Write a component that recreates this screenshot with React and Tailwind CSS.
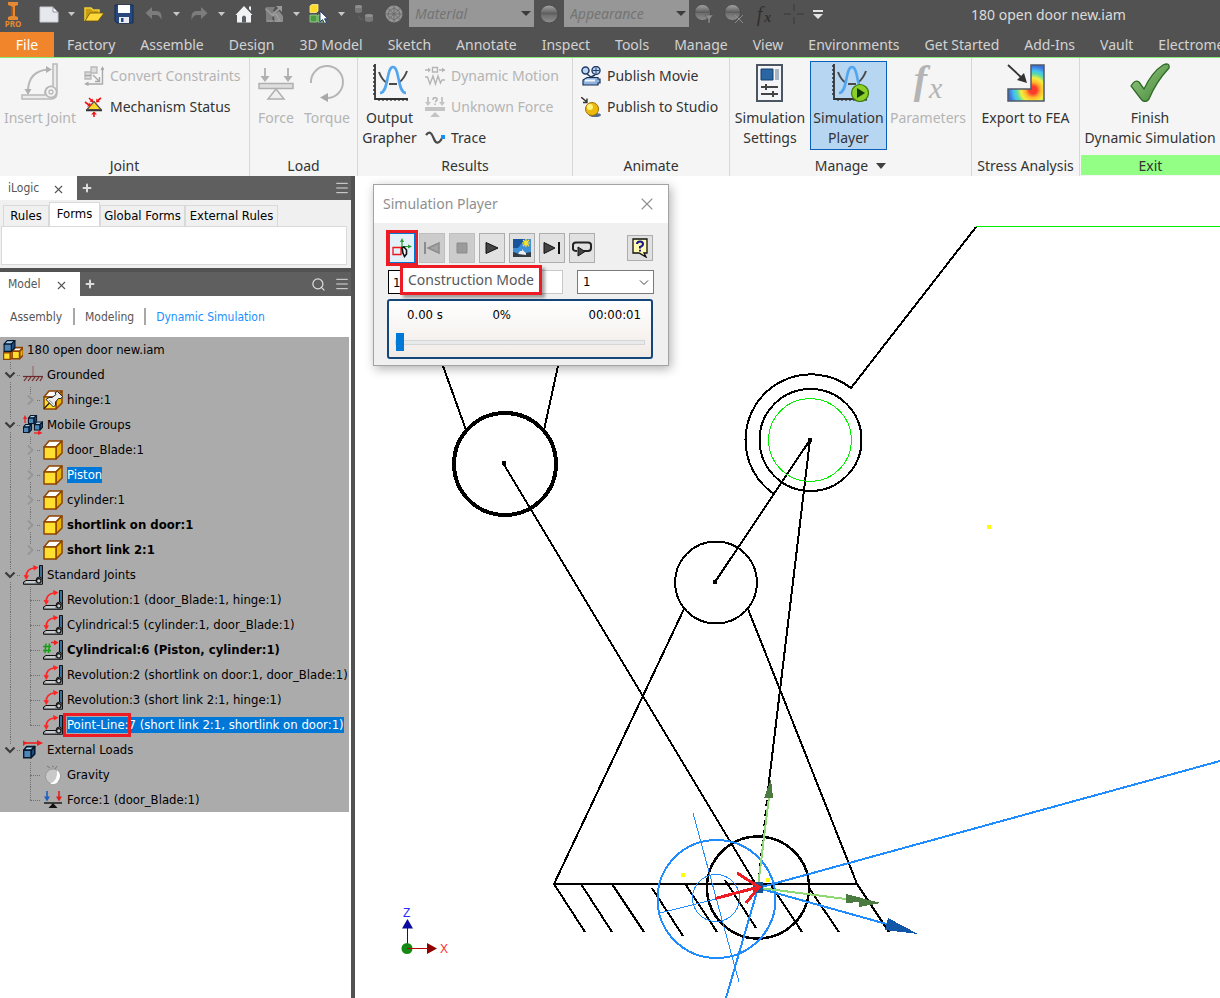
import { useState } from 'react';
import { Menu, Plus, Search, X } from 'lucide-react';

const TABS = [
    'Factory', 'Assemble', 'Design', '3D Model', 'Sketch', 'Annotate', 'Inspect', 'Tools',
    'Manage', 'View', 'Environments', 'Get Started', 'Add-Ins', 'Vault', 'Electrome',
];

const TREE = [
    { label: 'Grounded', icon: 'ground', children: [{ label: 'hinge:1', icon: 'pinned', more: true }] },
    {
        label: 'Mobile Groups',
        icon: 'groups',
        children: [
            { label: 'door_Blade:1', icon: 'part', more: true },
            { label: 'Piston', icon: 'part', more: true, selected: true },
            { label: 'cylinder:1', icon: 'part', more: true },
            { label: 'shortlink on door:1', icon: 'part', more: true, bold: true },
            { label: 'short link 2:1', icon: 'part', more: true, bold: true },
        ],
    },
    {
        label: 'Standard Joints',
        icon: 'joint',
        children: [
            { label: 'Revolution:1 (door_Blade:1, hinge:1)', icon: 'joint' },
            { label: 'Cylindrical:5 (cylinder:1, door_Blade:1)', icon: 'joint' },
            { label: 'Cylindrical:6 (Piston, cylinder:1)', icon: 'jointHash', bold: true },
            { label: 'Revolution:2 (shortlink on door:1, door_Blade:1)', icon: 'joint' },
            { label: 'Revolution:3 (short link 2:1, hinge:1)', icon: 'joint' },
            { label: 'Point-Line:7 (short link 2:1, shortlink on door:1)', icon: 'joint', selected: true, marked: true },
        ],
    },
    {
        label: 'External Loads',
        icon: 'loads',
        children: [
            { label: 'Gravity', icon: 'gravity' },
            { label: 'Force:1 (door_Blade:1)', icon: 'force' },
        ],
    },
];

function Svg({ size = 20, children, className = '' }) {
    return (
        <svg width={size} height={size} viewBox={`0 0 ${size} ${size}`} fill="none" className={`shrink-0 ${className}`} aria-hidden="true">
            {children}
        </svg>
    );
}

/* ---------- tree icons ---------- */

function Cube({ x = 0, y = 0, s = 1, front = '#ffe02e', top = '#fff', side = '#e8b800', line = '#8f4300', w = 1.5 }) {
    return (
        <g transform={`translate(${x} ${y}) scale(${s})`} stroke={line} strokeWidth={w} strokeLinejoin="round">
            <path d="M1 7 L6 1 H19 L13 7 Z" fill={top} />
            <path d="M13 7 L19 1 V13 L13 19 Z" fill={side} />
            <path d="M1 7 H13 V19 H1 Z" fill={front} />
        </g>
    );
}

const BLUE = { front: '#4d86b8', top: '#a8d0f0', side: '#1d4a80', line: '#08182c', w: 2.5 };

function JointIcon({ hash }) {
    return (
        <Svg>
            <path d="M16.500 0.500 H19.500 V16 H16.500 Z" fill="#3b6f9c" stroke="#111" />
            <path d="M0.500 19.300 V17 L3 15.500 H13 Q13 12 16.500 12 Q19.500 12.500 19.500 16 V19.300 Z" fill="#8f979d" stroke="#111" />
            <path d="M2.500 17 H12" stroke="#f0f0f0" strokeWidth="1.200" />
            <circle cx="15.800" cy="15.800" r="2.200" fill="#c6ccd0" stroke="#111" strokeWidth="1.200" />
            {hash ? (
                <g>
                    <path d="M3 3.500 L2 13 M6.500 3.500 L5.500 13 M0 6.500 H8 M0 10.500 H8" stroke="#11a011" strokeWidth="1.500" />
                    <path d="M8 2.500 H12" stroke="#f02020" strokeWidth="1.500" />
                    <path d="M11 0 L15.500 2.500 L11 5.500 Z" fill="#f02020" />
                </g>
            ) : (
                <g>
                    <path d="M3.200 11 Q3.500 4 11 3" stroke="#ff2424" strokeWidth="1.700" />
                    <path d="M10 0 L15.500 2.500 L11 5.500 Z M0.500 10 L6 10.500 L3.200 15 Z" fill="#ff2424" />
                </g>
            )}
        </Svg>
    );
}

function TreeIcon({ name }) {
    switch (name) {
        case 'part':
            return <Svg><Cube /></Svg>;
        case 'pinned':
            return (
                <Svg>
                    <Cube />
                    <path d="M1 18.500 L8 11.500" stroke="#222" strokeWidth="1.500" />
                    <path d="M3 9.500 L6 7.500 L9 7.500 L13 4.500 L12 2.500 L14.500 1.500 L19.500 6.500 L18 8.500 L15.500 8.500 L12.500 12 L12.500 15 L10.500 17 Z" fill="#ececec" stroke="#222" strokeWidth="1" strokeLinejoin="round" />
                    <path d="M6 10 L10.500 14" stroke="#999" />
                </Svg>
            );
        case 'ground':
            return (
                <Svg>
                    <path d="M10 1 V11" stroke="#9a7a7a" strokeWidth="1.500" />
                    <path d="M0 11.500 H20" stroke="#6e2a2a" strokeWidth="1.200" />
                    <path d="M4 12 L1 16 M8 12 L5 16 M12 12 L9 16 M16 12 L13 16 M19.500 12 L17 16" stroke="#6e2a2a" strokeWidth="1.200" />
                </Svg>
            );
        case 'groups':
            return (
                <Svg>
                    <Cube x={5} y={0} s={0.45} {...BLUE} />
                    <Cube x={0} y={9} s={0.45} {...BLUE} />
                    <Cube x={11} y={6.5} s={0.45} {...BLUE} />
                    <path d="M2 3 V8" stroke="#f02020" strokeWidth="1.300" />
                    <path d="M0 4 L2 0 L4 4 Z M15 15.500 L19.500 18 L15 20 Z" fill="#f02020" />
                    <path d="M11 18 H16" stroke="#f02020" strokeWidth="1.300" />
                </Svg>
            );
        case 'joint':
            return <JointIcon />;
        case 'jointHash':
            return <JointIcon hash />;
        case 'loads':
            return (
                <Svg>
                    <Cube x={0} y={6} s={0.62} {...BLUE} />
                    <path d="M2 3 H15" stroke="#f02020" strokeWidth="1.600" />
                    <path d="M14 0 L20 3 L14 6 Z M0 0.500 L4 3 L0 6 Z" fill="#f02020" />
                </Svg>
            );
        case 'gravity':
            return (
                <Svg>
                    <path d="M4 1 L7 3 M9 1 L11 2 M14 1 L12 4" stroke="#777" />
                    <circle cx="10" cy="11.500" r="7.500" fill="#c9c9c9" stroke="#909090" strokeWidth="0.8" />
                    <path d="M14 5 Q20 10 14 18 Q11 20 7 18.500 Q15 16 14 5" fill="#fff" />
                </Svg>
            );
        case 'force':
            return (
                <Svg>
                    <path d="M4 1 V9" stroke="#1f5fc0" strokeWidth="1.600" />
                    <path d="M1 6.500 H7 L4 11.500 Z" fill="#1f5fc0" />
                    <path d="M16 1 V9" stroke="#e02020" strokeWidth="1.600" />
                    <path d="M13 6.500 H19 L16 11.500 Z" fill="#e02020" />
                    <path d="M1 13 H19" stroke="#333" strokeWidth="1.800" />
                    <path d="M10 13 L14.500 18 H5.500 Z" fill="#111" />
                </Svg>
            );
        default:
            return (
                <Svg>
                    <Cube x={0} y={9} s={0.55} w={2.5} />
                    <Cube x={8.5} y={7} s={0.62} w={2.5} />
                    <Cube x={0.5} y={0} s={0.6} {...BLUE} w={2} />
                </Svg>
            );
    }
}

/* ---------- quick access toolbar ---------- */

function QatButton({ label, children }) {
    return (
        <button type="button" aria-label={label} className="flex h-7 w-[30px] shrink-0 items-center justify-center">
            {children}
        </button>
    );
}

function Caret({ label = 'More' }) {
    return (
        <button type="button" aria-label={label} className="flex h-7 w-[15px] shrink-0 items-center justify-center">
            <svg width="7" height="4" viewBox="0 0 7 4" aria-hidden="true"><path d="M0 0 H7 L3.500 4 Z" fill="#c8c8c8" /></svg>
        </button>
    );
}

function QatSelect({ label }) {
    return (
        <div className="relative w-[125px] shrink-0">
            <select aria-label={label} className="h-[27px] w-full appearance-none bg-[#979797] px-1.5 text-sm text-[#747474] italic">
                <option>{label}</option>
            </select>
            <svg width="10" height="5" viewBox="0 0 10 5" className="pointer-events-none absolute top-[11px] right-[3px]" aria-hidden="true">
                <path d="M0 0 H10 L5 5 Z" fill="#3c3c3c" />
            </svg>
        </div>
    );
}

function Ball({ children, r = 9, cx = 10, cy = 10 }) {
    return (
        <Svg>
            <defs>
                <linearGradient id="ball" x1="0" y1="0" x2="0" y2="1">
                    <stop offset="0" stopColor="#a6a6a6" />
                    <stop offset="0.5" stopColor="#5c5c5c" />
                    <stop offset="0.55" stopColor="#6e6e6e" />
                    <stop offset="1" stopColor="#8f8f8f" />
                </linearGradient>
            </defs>
            <circle cx={cx} cy={cy} r={r} fill="url(#ball)" stroke="#454545" strokeWidth="0.8" />
            {children}
        </Svg>
    );
}

function TitleBar() {
    return (
        <div className="flex h-8 items-start overflow-hidden">
            <div className="flex w-[34px] shrink-0 flex-col items-center pt-0.5 pr-2 text-[#e8892c]">
                <svg width="10" height="18" viewBox="0 0 10 18" aria-hidden="true">
                    <path d="M0 0 H10 V3 L7 4 V14 L10 15 V18 H0 V15 L3 14 V4 L0 3 Z" fill="#e58a34" />
                    <path d="M3 4 L5 5 V14 L3 14 Z" fill="#a8560f" />
                </svg>
                <span className="text-[8px] leading-[8px] font-bold">PRO</span>
            </div>
            <QatButton label="New">
                <Svg>
                    <path d="M1 3 H14 L19 8 V18 H1 Z" fill="#e6e8ee" stroke="#c9cbd2" />
                    <path d="M14 3 V8 H19 Z" fill="#fff" stroke="#8f939c" />
                </Svg>
            </QatButton>
            <Caret />
            <QatButton label="Open">
                <Svg>
                    <path d="M1 17 V4 H7 L9 6 H15 V9" fill="#c99d10" stroke="#f0cf3a" strokeWidth="1.500" />
                    <path d="M1 17 L6 9 H20 L14 17 Z" fill="#ffd83a" stroke="#6b5200" strokeWidth="0.8" />
                </Svg>
            </QatButton>
            <QatButton label="Save">
                <Svg>
                    <path d="M1 1 H19 V19 H3 L1 17 Z" fill="#27487f" stroke="#112a55" />
                    <path d="M4 1 H16 V9 H4 Z" fill="#fff" />
                    <path d="M5 13 H15 V19 H5 Z" fill="#e8ecf2" />
                    <path d="M7 14 H9.500 V18 H7 Z" fill="#27487f" />
                </Svg>
            </QatButton>
            <QatButton label="Undo">
                <Svg><path d="M1.500 9 L8 3 V7 H13 Q18.500 7.500 17.500 16 Q15.500 11 12 11 H8 V15 Z" fill="#7c7c7c" /></Svg>
            </QatButton>
            <Caret />
            <QatButton label="Redo">
                <Svg><path d="M18.500 9 L12 3 V7 H7 Q1.500 7.500 2.500 16 Q4.500 11 8 11 H12 V15 Z" fill="#7c7c7c" /></Svg>
            </QatButton>
            <Caret />
            <QatButton label="Home">
                <Svg>
                    <path d="M10 2 L18.500 11 H17 V18.500 H3 V11 H1.500 Z" fill="#f1f2f4" />
                    <path d="M8 18.500 V13 Q10 10 12 13 V18.500 Z" fill="#5a5d66" />
                    <path d="M15 2.500 H17 V7 L15 5 Z" fill="#f1f2f4" />
                </Svg>
            </QatButton>
            <QatButton label="Update">
                <Svg>
                    <path d="M1 4 L3 3 H11 L9 7 L12 10 L8 13 L9 18 H2 V9 Z" fill="#7e7e7e" />
                    <path d="M12 9 L15 7 L19 12 V18 H11 L10 13 Z" fill="#8c8c8c" />
                    <path d="M2 5 L9 12 L12 10 L16 17 H3" stroke="#a0a0a0" strokeWidth="1.200" />
                    <path d="M17 3 L8 11" stroke="#9a9a9a" strokeWidth="2" />
                    <path d="M12 2 H18 V8 Z" fill="#9a9a9a" />
                </Svg>
            </QatButton>
            <Caret />
            <QatButton label="Select">
                <Svg>
                    <path d="M1 2 L3 0.500 H9 V7 L7.500 8.500 H1 Z" fill="#ffdd2a" stroke="#fff3a0" strokeWidth="0.8" />
                    <path d="M1 11 H8 V18 H1 Z M9 11 H15 V18 H9 Z" fill="#4c9b42" stroke="#a9d79f" strokeWidth="0.8" />
                    <path d="M11 7 V18 L13.500 15.500 L15.500 19.500 L17.500 18.500 L15.500 14.800 H19 Z" fill="#fff" stroke="#24406f" strokeWidth="1" />
                </Svg>
            </QatButton>
            <Caret />
            <QatButton label="Components">
                <Svg>
                    <path d="M1 2 Q4.500 0 8 2 V8 Q4.500 10 1 8 Z M11 11 Q15 9 19 11 V17 Q15 19 11 17 Z" fill="#787878" />
                    <ellipse cx="4.500" cy="2.500" rx="3.500" ry="1.600" fill="#8f8f8f" />
                    <ellipse cx="15" cy="11.500" rx="4" ry="1.600" fill="#8f8f8f" />
                    <path d="M5 12 V15 H9" stroke="#6c6c6c" strokeDasharray="1 1" />
                </Svg>
            </QatButton>
            <QatButton label="Web">
                <Svg>
                    <circle cx="10" cy="10" r="8.500" fill="#949494" />
                    <path d="M10 2 V18 M2 10 H18 M4 4.500 L16 15.500 M16 4.500 L4 15.500 M5 7 L10 4 L15 7 L16 12 L10 16 L4 12 Z" stroke="#666" strokeWidth="0.8" />
                </Svg>
            </QatButton>
            <QatSelect label="Material" />
            <QatButton label="Appearance wheel"><Ball /></QatButton>
            <QatSelect label="Appearance" />
            <QatButton label="Adjust">
                <Ball r={8} cx={8.5} cy={8.5}>
                    <path d="M11 11 H19 L16 15 V19 H14 V15 Z" fill="#8e8e8e" stroke="#555" strokeWidth="0.600" />
                </Ball>
            </QatButton>
            <QatButton label="Clear">
                <Ball r={8} cx={8.5} cy={8.5}>
                    <path d="M11 11 L19 19 M19 11 L11 19" stroke="#8e8e8e" />
                </Ball>
            </QatButton>
            <QatButton label="Parameters">
                <span className="flex gap-0.5 font-['Liberation_Serif'] text-xl leading-5 text-[#303030] italic">f<sub className="top-1 text-sm font-bold">x</sub></span>
            </QatButton>
            <QatButton label="Center">
                <Svg><path d="M10 0 V7 M10 13 V20 M0 10 H7 M13 10 H20" stroke="#424242" strokeWidth="1.500" /></Svg>
            </QatButton>
            <button type="button" aria-label="Customize" className="flex h-7 w-[18px] shrink-0 items-center justify-center">
                <svg width="10" height="9" viewBox="0 0 10 9" aria-hidden="true"><path d="M0 0 H10 V2 H0 Z M0 4 H10 L5 9 Z" fill="#e4e4e4" /></svg>
            </button>
            <div className="flex h-[30px] flex-1 items-center pl-36 text-sm whitespace-nowrap text-[#dcdcdc]">180 open door new.iam</div>
        </div>
    );
}

function RibbonTabs() {
    return (
        <nav className="flex h-[25px] items-stretch overflow-hidden text-sm whitespace-nowrap text-[#d2d2d2]">
            <button type="button" className="w-[54px] shrink-0 bg-[#f0852b] text-white">File</button>
            {TABS.map((tab) => (
                <button type="button" key={tab} className="shrink-0 pl-[13px] pr-3">{tab}</button>
            ))}
        </nav>
    );
}

/* ---------- ribbon ---------- */

function Group({ label, width, children, exit, arrow }) {
    return (
        <section className={`flex flex-col border-[#d8d8d8] ${exit ? '' : 'shrink-0 border-r'} ${width}`}>
            <div className="flex flex-1 pt-[3px]">{children}</div>
            <h2 className={`mb-px flex h-5 items-end justify-center gap-2 leading-[18px] ${exit ? 'ml-px bg-[#94ff85]' : ''}`}>
                {label}
                {arrow && <svg width="10" height="6" viewBox="0 0 10 6" className="mb-1.5" aria-hidden="true"><path d="M0 0 H10 L5 6 Z" fill="#404040" /></svg>}
            </h2>
        </section>
    );
}

function BigButton({ icon, lines, width, disabled, active }) {
    return (
        <button
            type="button"
            disabled={disabled}
            className={`flex h-[89px] shrink-0 flex-col items-center border leading-5 whitespace-nowrap ${width} ${active ? 'border-[#0a5fb8] bg-[#b7d6f2]' : 'border-transparent'} ${disabled ? 'text-[#b4b4b4]' : ''}`}
        >
            <span className="flex h-[46px] items-start">{icon}</span>
            {lines.map((line) => <span key={line}>{line}</span>)}
        </button>
    );
}

function SmallButton({ icon, label, disabled }) {
    return (
        <button type="button" disabled={disabled} className={`flex h-[30px] items-center gap-1.5 whitespace-nowrap ${disabled ? 'text-[#b4b4b4]' : ''}`}>
            {icon}
            {label}
        </button>
    );
}

function Graph({ player }) {
    return (
        <Svg size={40}>
            <path d="M5 2 V37 H38" stroke="#333" strokeWidth="1.800" />
            <path d="M3 4 H5 M3 8 H5 M3 12 H5 M3 16 H5 M3 20 H5 M3 24 H5 M3 28 H5 M3 32 H5 M9 37 V39 M13 37 V39 M17 37 V39 M21 37 V39 M25 37 V39 M29 37 V39 M33 37 V39 M37 37 V39" stroke="#333" strokeWidth="1.300" />
            <path d="M9 10 Q12 18 16.500 20.500 M29 20.500 Q34 17 37 9 M19 22 H27" stroke="#4a4a4a" strokeWidth="2" />
            <path d="M10 31 C19 31 16 5 23 5 C30 5 27 31 36 31" stroke="#52a5ef" strokeWidth="2.600" />
            {player && (
                <g>
                    <circle cx="31" cy="31" r="8.500" fill="#8ccf26" stroke="#3f7d0d" strokeWidth="1.200" />
                    <path d="M28 26 L36 31 L28 36 Z" fill="#123a05" />
                </g>
            )}
        </Svg>
    );
}

function Ribbon() {
    return (
        <div className="flex h-[119px] overflow-hidden border-t border-[#84ec75] bg-[#f5f5f5] text-sm text-[#333]">
            <Group label="Joint" width="w-[250px]">
                <BigButton
                    width="w-20"
                    disabled
                    lines={['Insert Joint']}
                    icon={
                        <Svg size={40}>
                            <path d="M33 2 H37 V28 Q38 37 31 37 H2 V33 H25 Q24 24 33 24 Z" fill="#ececec" stroke="#b8b8b8" strokeWidth="1.500" />
                            <circle cx="31" cy="30" r="5.500" fill="#f4f4f4" stroke="#b8b8b8" strokeWidth="1.500" />
                            <circle cx="31" cy="30" r="2" stroke="#b8b8b8" strokeWidth="1.300" />
                            <path d="M8 28 Q9 9 28 7.500" stroke="#b8b8b8" strokeWidth="2" />
                            <path d="M26 4 L32 7.500 L26 11 Z M4.500 27 H11.500 L8 33 Z" fill="#b0b0b0" />
                        </Svg>
                    }
                />
                <div className="flex flex-col gap-px pl-1">
                    <SmallButton
                        disabled
                        label="Convert Constraints"
                        icon={
                            <Svg>
                                <path d="M7 1 H13 V7 H7 Z M1 6 H7 V13 H1 Z" fill="#ddd" stroke="#b8b8b8" strokeWidth="1.300" />
                                <path d="M1 9.500 H7 M9 9 L15 15 M15.500 11 V15.500 H11 M18.500 3 V18 H3" stroke="#a9a9a9" strokeWidth="1.400" />
                                <path d="M0 18 L4.500 15.500 V20 Z M18.500 0 L20.500 4 H16.500 Z" fill="#a9a9a9" />
                            </Svg>
                        }
                    />
                    <SmallButton
                        label="Mechanism Status"
                        icon={
                            <Svg>
                                <path d="M10 4.500 L17 12.500 H3 Z" fill="#ffd629" stroke="#555" strokeWidth="1.200" />
                                <path d="M2 13.500 H18" stroke="#333" strokeWidth="1.500" />
                                <path d="M1 5 L5 8 M5 1 L8 4 M17 1 L13 4 M10 15 V20" stroke="#ee1515" strokeWidth="1.600" />
                                <path d="M3 9.500 L7 9 L6 5.500 Z M9.500 5.500 L8.500 1.500 L5.500 4.500 Z M12 5.500 L12.500 1.500 L16 5 Z M7 17.500 L10 14.500 L13 17.500 Z" fill="#ee1515" />
                            </Svg>
                        }
                    />
                </div>
            </Group>

            <Group label="Load" width="w-[108px]">
                <BigButton
                    width="w-[52px]"
                    disabled
                    lines={['Force']}
                    icon={
                        <Svg size={40}>
                            <path d="M9 6 V17 M32 6 V17" stroke="#b0b0b0" strokeWidth="1.800" />
                            <path d="M4.500 14 H13.500 L9 20 Z M27.500 14 H36.500 L32 20 Z" fill="#b0b0b0" />
                            <path d="M3 21.500 H37 V26.500 H3 Z" fill="#dedede" stroke="#b0b0b0" strokeWidth="1.500" />
                            <path d="M20 27 L28 37 H12 Z" fill="#efefef" stroke="#b0b0b0" strokeWidth="1.500" />
                        </Svg>
                    }
                />
                <BigButton
                    width="w-[50px]"
                    disabled
                    lines={['Torque']}
                    icon={
                        <Svg size={40}>
                            <path d="M4 21 A16 16 0 1 1 20 36" stroke="#b6b6b6" strokeWidth="2" />
                            <path d="M13 35.500 L21 31 V40 Z" fill="#a8a8a8" />
                        </Svg>
                    }
                />
            </Group>

            <Group label="Results" width="w-[215px]">
                <BigButton width="w-[63px]" lines={['Output', 'Grapher']} icon={<Graph />} />
                <div className="flex flex-col gap-px pl-1">
                    <SmallButton
                        disabled
                        label="Dynamic Motion"
                        icon={
                            <Svg>
                                <path d="M7.500 1.500 H12.500 V6 H7.500 Z M0 4 H5 M14 4 H20" stroke="#b5b5b5" strokeWidth="1.400" />
                                <path d="M3 1.500 L6 4 L3 6.500 Z M17 1.500 L20 4 L17 6.500 Z" fill="#b5b5b5" />
                                <path d="M0 11 L2.500 11 L5 18 L8 10 L10.500 18 L13 10 L15.500 17 L17 14 H20" stroke="#b5b5b5" strokeWidth="1.400" />
                            </Svg>
                        }
                    />
                    <SmallButton
                        disabled
                        label="Unknown Force"
                        icon={
                            <Svg>
                                <path d="M3 0 V6 M17 0 V6 M8 3 Q8 0.500 10 0.500 Q12.500 0.800 12 3 L10 5 M10 6.500 V8" stroke="#b5b5b5" strokeWidth="1.500" />
                                <path d="M0 5 H6 L3 9 Z M14 5 H20 L17 9 Z M0 10 H20 V14 H0 Z M10 15 L15 20 H5 Z" fill="#c4c4c4" />
                            </Svg>
                        }
                    />
                    <SmallButton
                        label="Trace"
                        icon={
                            <Svg>
                                <path d="M1 7 C5 2 7 6 9 11 C11 16 14 16 17 10" stroke="#4a4a4a" strokeWidth="2.200" />
                                <path d="M16 7 H20 V11 H16 Z" fill="#1c8df0" />
                            </Svg>
                        }
                    />
                </div>
            </Group>

            <Group label="Animate" width="w-[157px]">
                <div className="flex flex-col gap-px pl-2">
                    <SmallButton
                        label="Publish Movie"
                        icon={
                            <Svg>
                                <circle cx="4.500" cy="4.500" r="3.500" fill="#b9d7f3" stroke="#243d66" strokeWidth="1.500" />
                                <circle cx="15" cy="4.500" r="4" fill="#b9d7f3" stroke="#243d66" strokeWidth="1.500" />
                                <path d="M15 1.500 V7.500 M12 4.500 H18" stroke="#243d66" />
                                <path d="M6 8 L10 11 L14 9" stroke="#243d66" strokeWidth="1.500" />
                                <path d="M2 19 V14 L6 11.500 H17 V13 H19 V17 H17 V19 Z" fill="#8fb3dd" stroke="#182f58" strokeWidth="1.200" />
                                <path d="M4 14.500 H14" stroke="#f4f9fe" strokeWidth="2" />
                            </Svg>
                        }
                    />
                    <SmallButton
                        label="Publish to Studio"
                        icon={
                            <Svg>
                                <ellipse cx="14" cy="18" rx="6" ry="2" fill="#52688c" />
                                <circle cx="11" cy="12" r="6.500" fill="#edb90c" stroke="#9a7200" />
                                <circle cx="9" cy="10" r="3" fill="#fff27a" />
                                <path d="M0 0 L6 5 M6 1.500 V5.500 H2" stroke="#333" strokeWidth="1.400" />
                            </Svg>
                        }
                    />
                </div>
            </Group>

            <Group label="Manage" width="w-[242px]" arrow>
                <BigButton
                    width="w-20"
                    lines={['Simulation', 'Settings']}
                    icon={
                        <Svg size={40}>
                            <path d="M7 3 H32 V39 H7 Z" fill="#f3f5f8" stroke="#4c5663" strokeWidth="2" />
                            <path d="M11 7 H23 V18 H11 Z" fill="#2966a3" stroke="#173f6b" />
                            <path d="M25 7 H29 V18 H25 Z" fill="#aab4c0" />
                            <path d="M11 25 H28 M11 32 H28 M16 22 V28 M23 29 V35" stroke="#444" strokeWidth="2" />
                        </Svg>
                    }
                />
                <BigButton width="w-[77px]" lines={['Simulation', 'Player']} active icon={<Graph player />} />
                <BigButton
                    width="w-[82px]"
                    disabled
                    lines={['Parameters']}
                    icon={<span className="flex gap-0.5 font-['Liberation_Serif'] text-[40px] leading-9 font-bold text-[#b4b4b4] italic">f<sub className="top-2 text-3xl leading-9 font-normal">x</sub></span>}
                />
            </Group>

            <Group label="Stress Analysis" width="w-[108px]">
                <BigButton
                    width="w-[107px]"
                    lines={['Export to FEA']}
                    icon={
                        <Svg size={40}>
                            <defs>
                                <radialGradient id="fea" gradientUnits="userSpaceOnUse" cx="27" cy="28" r="24">
                                    <stop offset="0.15" stopColor="#f93a2c" />
                                    <stop offset="0.32" stopColor="#ffb52c" />
                                    <stop offset="0.5" stopColor="#f4ef3c" />
                                    <stop offset="0.68" stopColor="#57d9a8" />
                                    <stop offset="0.8" stopColor="#45c4f0" />
                                    <stop offset="1" stopColor="#3d70dd" />
                                </radialGradient>
                            </defs>
                            <path d="M25 3 H38 V39 H2 V27 H25 Z" fill="url(#fea)" stroke="#505a68" strokeWidth="1.500" />
                            <path d="M2 3 L17 17" stroke="#333" strokeWidth="1.800" />
                            <path d="M21 21 L11 18 L18 11 Z" fill="#333" />
                        </Svg>
                    }
                />
            </Group>

            <Group label="Exit" width="min-w-[140px] flex-1" exit>
                <BigButton
                    width="w-full"
                    lines={['Finish', 'Dynamic Simulation']}
                    icon={
                        <Svg size={40}>
                            <defs>
                                <linearGradient id="tick" x1="0" y1="0" x2="1" y2="1">
                                    <stop offset="0" stopColor="#9ccb88" />
                                    <stop offset="1" stopColor="#3f8433" />
                                </linearGradient>
                            </defs>
                            <path d="M1 24 Q5 17 9 20 L14 27 Q22 10 33 3 Q40 0 39 6 Q26 20 19 37 Q15 42 11 37 Z" fill="url(#tick)" stroke="#2e6b26" strokeWidth="1.300" />
                        </Svg>
                    }
                />
            </Group>
        </div>
    );
}

/* ---------- browser panels ---------- */

function PanelHeader({ title, width, search }) {
    return (
        <div className="flex h-6 items-center bg-[#5f5f5f] text-xs text-[#dcdcdc]">
            <div className={`flex h-full items-center justify-between bg-white pr-3 pl-2 text-[#555] ${width}`}>
                <span>{title}</span>
                <button type="button" aria-label={`Close ${title}`} className="pt-0.5"><X size={13} strokeWidth={2} /></button>
            </div>
            <button type="button" aria-label="Add panel" className="ml-1"><Plus size={12} strokeWidth={4} /></button>
            <div className="flex flex-1 items-center justify-end gap-2 pr-px">
                {search && <button type="button" aria-label="Search"><Search size={15} strokeWidth={2} /></button>}
                <button type="button" aria-label="Panel menu"><Menu size={16} strokeWidth={1.5} /></button>
            </div>
        </div>
    );
}

function ILogicPanel() {
    const tab = 'h-[21px] border border-b-0 border-[#d9d9d9] whitespace-nowrap';
    return (
        <section>
            <PanelHeader title="iLogic" width="w-[77px]" />
            <div className="h-[68px] bg-[#f0f0f0] pt-0.5 pr-1 pb-[3px] pl-px text-black">
                <div className="flex h-6 items-end pl-0.5">
                    <button type="button" className={`${tab} w-[46px]`}>Rules</button>
                    <button type="button" className="h-6 w-[51px] border border-b-0 border-[#d9d9d9] bg-white pb-0.5">Forms</button>
                    <button type="button" className={`${tab} w-[85px]`}>Global Forms</button>
                    <button type="button" className={`${tab} w-[93px]`}>External Rules</button>
                </div>
                <div className="h-[39px] border border-[#d9d9d9] bg-white" />
            </div>
        </section>
    );
}

function TreeRow({ node, level, last, lastParent }) {
    const [open, setOpen] = useState(true);
    const text = `relative whitespace-nowrap ${node.bold ? 'font-bold' : ''} ${node.selected ? 'bg-[#0078d7] text-white' : ''}`;
    return (
        <li>
            <div className="flex h-[25px] items-center">
                {level === 2 && (
                    <span className="flex w-5 shrink-0 justify-center self-stretch">
                        {!lastParent && <span className="border-l border-dotted border-[#707070]" />}
                    </span>
                )}
                <span className="relative flex w-5 shrink-0 justify-center self-stretch">
                    <span className={`border-l border-dotted border-[#707070] ${last ? 'h-1/2' : 'h-full'}`} />
                    <span className="absolute top-1/2 right-0 left-1/2 border-t border-dotted border-[#707070]" />
                    {(level === 1 || node.more) && (
                        <button type="button" aria-label={`Toggle ${node.label}`} onClick={() => setOpen(!open)} className="absolute inset-0 flex items-center justify-center">
                            <svg width="12" height="12" viewBox="0 0 12 12" fill="none" className="bg-[#ababab]" aria-hidden="true">
                                {level === 1
                                    ? <path d="M1.500 3.500 L6 8 L10.500 3.500" stroke="#3c3c3c" strokeWidth="2.200" />
                                    : <path d="M4 1.500 L8.500 6 L4 10.500" stroke="#969696" strokeWidth="2" />}
                            </svg>
                        </button>
                    )}
                </span>
                <span className="w-[3px] shrink-0" />
                <TreeIcon name={node.icon} />
                <span className="w-1 shrink-0" />
                <span className={text}>
                    {node.label}
                    {node.marked && <span className="absolute -top-1 -left-1 h-6 w-[68px] border-[3px] border-[#ed1c24]" />}
                </span>
            </div>
            {open && node.children && (
                <ul>
                    {node.children.map((child, i) => (
                        <TreeRow key={child.label} node={child} level={2} last={i === node.children.length - 1} lastParent={last} />
                    ))}
                </ul>
            )}
        </li>
    );
}

function ModelPanel() {
    return (
        <section className="border-t-4 border-[#525252]">
            <PanelHeader title="Model" width="w-20" search />
            <nav className="flex h-[41px] items-center text-xs text-[#555]">
                <a href="#assembly" className="pr-[11px] pl-2.5">Assembly</a>
                <span className="h-[17px] border-l-2 border-[#a8a8a8]" />
                <a href="#modeling" className="px-2.5">Modeling</a>
                <span className="h-[17px] border-l-2 border-[#a8a8a8]" />
                <a href="#simulation" className="px-2.5 text-[#1890ff]">Dynamic Simulation</a>
            </nav>
            <div className="mr-0.5 overflow-hidden bg-[#ababab] text-black">
                <div className="flex h-[25px] items-center gap-1 pl-[3px]">
                    <TreeIcon name="assembly" />
                    <span>180 open door new.iam</span>
                </div>
                <ul>
                    {TREE.map((node, i) => <TreeRow key={node.label} node={node} level={1} last={i === TREE.length - 1} />)}
                </ul>
            </div>
        </section>
    );
}

/* ---------- simulation player ---------- */

function PlayerButton({ label, disabled, active, children }) {
    return (
        <button
            type="button"
            aria-label={label}
            disabled={disabled}
            className={`flex h-[30px] w-[26px] shrink-0 items-center justify-center border ${active ? 'border-[#0078d7] bg-[#e3f1fb] outline-[3px] outline-[#ed1c24]' : disabled ? 'border-[#bfbfbf] bg-[#cccccc]' : 'border-[#adadad] bg-[#e1e1e1]'}`}
        >
            {children}
        </button>
    );
}

function SimulationPlayer() {
    const [progress, setProgress] = useState(0);
    return (
        <div role="dialog" aria-label="Simulation Player" className="absolute top-2 left-[18px] w-[296px] border border-[#a3a3a3] bg-[#f0f0f0] pb-1.5 text-black shadow-[2px_3px_10px_rgba(0,0,0,0.3)]">
            <div className="flex h-[38px] items-center justify-between bg-white pr-[11px] pl-[9px] font-['Noto_Sans',sans-serif] text-sm text-[#8f8f8f]">
                Simulation Player
                <button type="button" aria-label="Close"><X size={20} strokeWidth={1.3} /></button>
            </div>
            <div className="px-[13px]">
                <div className="flex items-center gap-1 pt-2.5 pl-0.5">
                    <PlayerButton label="Construction Mode" active>
                        <Svg>
                            <path d="M1 9.500 H9 V16.500 H1 Z" stroke="#ee1515" strokeWidth="1.300" />
                            <path d="M10 3 V16 M9 8.500 H17" stroke="#2b9a3a" strokeWidth="1.200" />
                            <path d="M10 0 L12 4 H8 Z M20 8.500 L16 6.500 V10.500 Z" fill="#2b9a3a" />
                            <path d="M10 10 L12 9 L14.500 12 L14.500 16 L12.500 18.500 L11 15 Z" fill="#fff" stroke="#111" strokeWidth="1.600" />
                        </Svg>
                    </PlayerButton>
                    <PlayerButton label="Rewind" disabled>
                        <Svg><path d="M3 4 V16" stroke="#8c8c8c" strokeWidth="2" /><path d="M17 5 V15 L6 10 Z" fill="#a4a4a4" stroke="#8c8c8c" strokeWidth="1.500" /></Svg>
                    </PlayerButton>
                    <PlayerButton label="Stop" disabled>
                        <Svg><path d="M5 5 H15 V15 H5 Z" fill="#9a9a9a" stroke="#8c8c8c" /></Svg>
                    </PlayerButton>
                    <PlayerButton label="Play">
                        <Svg><path d="M4 4.500 V15.500 L16 10 Z" fill="#444" stroke="#111" /></Svg>
                    </PlayerButton>
                    <PlayerButton label="Screen refresh">
                        <Svg>
                            <path d="M1 1 H19 V19 H1 Z" fill="#3f8fd6" />
                            <path d="M1 14 L8 16 L19 14 V19 H1 Z" fill="#333c44" />
                            <path d="M1 1 H13 L6 10 H1 Z" fill="#17549c" />
                            <path d="M6 16 L8 13 H10 L10.500 11 L11.500 13 L14 15 L14 17 Z" fill="#eee" />
                            <path d="M14 1 V9 M10 5 H18 M11 2 L17 8 M17 2 L11 8" stroke="#ffe326" strokeWidth="1.200" />
                        </Svg>
                    </PlayerButton>
                    <PlayerButton label="Go to end">
                        <Svg><path d="M2 4.500 V15.500 L13 10 Z" fill="#444" stroke="#111" /><path d="M17 4 V16" stroke="#111" strokeWidth="2" /></Svg>
                    </PlayerButton>
                    <PlayerButton label="Loop">
                        <Svg>
                            <path d="M5 13 Q0.500 13 1 10 V7 Q1 4.500 4 4.500 H16 Q19 4.500 19 7 V10 Q19 13 16 13 H12" stroke="#222" strokeWidth="2" />
                            <path d="M6 9 V18 L13 13.500 Z" fill="#444" stroke="#111" />
                        </Svg>
                    </PlayerButton>
                    <button type="button" aria-label="Help" className="mr-0.5 ml-auto flex size-[26px] items-center justify-center border border-[#adadad] bg-[#e1e1e1]">
                        <Svg>
                            <path d="M3 1 H17 V15 H14 L16 19 L9 15 H3 Z" fill="#fffbb0" stroke="#111" strokeWidth="1.300" />
                            <path d="M7 6 Q7 3.500 10 3.500 Q13 3.500 13 6 Q13 8 10 9 V10.500 M10 11.800 V13.500" stroke="#15158c" strokeWidth="2" />
                        </Svg>
                    </button>
                </div>
                <div className="relative flex gap-3 pt-[7px] pl-px">
                    <input aria-label="Final time" defaultValue="1" className="h-6 w-[88px] border border-black bg-white px-1" />
                    <input aria-label="Images" disabled className="h-6 w-[75px] border border-[#c8c8c8] bg-white px-1" />
                    <div className="relative ml-0.5 w-[77px]">
                        <select aria-label="Filter" className="h-6 w-full appearance-none border border-[#7a7a7a] bg-white px-[5px]">
                            <option>1</option>
                        </select>
                        <svg width="10" height="6" viewBox="0 0 10 6" fill="none" className="pointer-events-none absolute top-2.5 right-[5px]" aria-hidden="true">
                            <path d="M1 0.500 L5 4.500 L9 0.500" stroke="#444" />
                        </svg>
                    </div>
                    <div role="tooltip" className="absolute top-0.5 left-[13px] flex h-[30px] w-[142px] items-center justify-center border-[3px] border-[#ed1c24] bg-white font-['Noto_Sans',sans-serif] text-sm whitespace-nowrap text-[#575757] shadow-[3px_3px_3px_rgba(0,0,0,0.35)]">
                        Construction Mode
                    </div>
                </div>
                <div className="mt-[5px] flex h-[60px] w-[266px] flex-col rounded-[3px] border-2 border-[#15467a] bg-gradient-to-b from-white to-[#f1ebe7] px-1.5">
                    <div className="flex h-7 items-center justify-between pr-1 pl-3">
                        <span>0.00 s</span>
                        <span className="mr-7">0%</span>
                        <span>00:00:01</span>
                    </div>
                    <input
                        type="range"
                        aria-label="Simulation progress"
                        value={progress}
                        onChange={(e) => setProgress(e.target.value)}
                        className="h-[26px] w-full appearance-none bg-transparent [&::-webkit-slider-runnable-track]:h-[5px] [&::-webkit-slider-runnable-track]:border [&::-webkit-slider-runnable-track]:border-[#d6d6d6] [&::-webkit-slider-runnable-track]:bg-[#e7eaea] [&::-webkit-slider-thumb]:-mt-2 [&::-webkit-slider-thumb]:h-[18px] [&::-webkit-slider-thumb]:w-2 [&::-webkit-slider-thumb]:appearance-none [&::-webkit-slider-thumb]:bg-[#0078d7]"
                    />
                </div>
            </div>
        </div>
    );
}

/* ---------- model view ---------- */

function Mechanism() {
    return (
        <svg width="865" height="822" viewBox="355 176 865 822" fill="none" className="shrink-0" shapeRendering="crispEdges" aria-label="Mechanism sketch">
            <path d="M976 226.500 H1220" stroke="#00f000" strokeWidth="1" />
            <g stroke="#000" strokeWidth="2">
                <path d="M976 227 L851 388 A65.500 65.500 0 0 0 745.500 440 A65 65 0 0 0 774 494" />
                <circle cx="810.500" cy="440" r="51" />
                <circle cx="505" cy="464" r="51" strokeWidth="4" />
                <path d="M443 366 L466 430 M558 366 L544 430" />
                <path d="M503 463 L758 888" />
                <circle cx="716" cy="582.500" r="41" />
                <path d="M715 582 L810 440 L768 790" />
                <path d="M768 790 L758 888" strokeDasharray="6 4" />
                <path d="M684 609 L554 884 H857 L748 609 M857 884 L889 932" />
                <path d="M554 884 L585 932 M581 884 L612 932 M612 884 L644 932 M652 888 L683 936 M686 885 L717 932 M725 880 L756 928 M771 885 L802 932 M809 888 L839 932" />
                <circle cx="758" cy="887.500" r="51" strokeWidth="2.500" />
            </g>
            <circle cx="810" cy="440" r="41.500" stroke="#00f000" />
            <path d="M502 461 H506 V465 H502 Z M713 580 H717 V584 H713 Z M808 438 H812 V442 H808 Z" fill="#000" />
            <path d="M987 525 H991 V529 H987 Z M681 873 H685 V877 H681 Z M766 878 H770 V882 H766 Z" fill="#ff0" />
            <g stroke="#1e8cff">
                <circle cx="716.500" cy="899" r="59" strokeWidth="2" />
                <circle cx="716" cy="898" r="23.500" />
                <path d="M693 813 L739 982 M660 913 L716 899" />
                <path d="M758 888 L1220 761 M758 888 L726 998 M758 888 L890 925" strokeWidth="2" />
            </g>
            <path d="M758 886 L769 797 M760 888 L846 899" stroke="#8fd873" strokeWidth="2" />
            <path d="M771 779 L764 798 H773 Z M846 894 L881 903 L859 907 V902 L846 903 Z" fill="#4b7b40" />
            <path d="M888 918 L918 934 L885 930 Z" fill="#1256a8" />
            <path d="M753 882 H763 V893 H753 Z" fill="#17508f" />
            <path d="M715 898.500 L759 887 M737 873 L759 887 L746 903" stroke="#ed1c24" strokeWidth="3" />
            <g shapeRendering="auto">
                <path d="M407.500 928 V948" stroke="#0a0aa0" />
                <path d="M407.500 919 L413 928.500 H402 Z" fill="#0a0aa0" />
                <circle cx="407" cy="948.500" r="5.500" fill="#148a14" />
                <path d="M407 948.500 H428" stroke="#b40000" />
                <path d="M427 943 V954 L437 948.500 Z" fill="#8f0000" />
                <text x="403" y="917" fill="#2a2aff" className="font-['Liberation_Sans'] text-xs">Z</text>
                <text x="440" y="953" fill="#ff2a2a" className="font-['Liberation_Sans'] text-xs">X</text>
            </g>
        </svg>
    );
}

export default function App() {
    return (
        <div className="flex min-h-screen flex-col bg-white font-['Noto_Sans',sans-serif]">
            <header className="bg-[#525252]">
                <TitleBar />
                <RibbonTabs />
                <Ribbon />
            </header>
            <div className="flex flex-1 font-['DejaVu_Sans_Condensed','DejaVu_Sans',sans-serif] text-[13px] leading-4">
                <aside className="w-[355px] shrink-0 border-r-4 border-[#525252] bg-white">
                    <ILogicPanel />
                    <ModelPanel />
                </aside>
                <main className="relative flex flex-1 overflow-hidden">
                    <Mechanism />
                    <SimulationPlayer />
                </main>
            </div>
        </div>
    );
}
